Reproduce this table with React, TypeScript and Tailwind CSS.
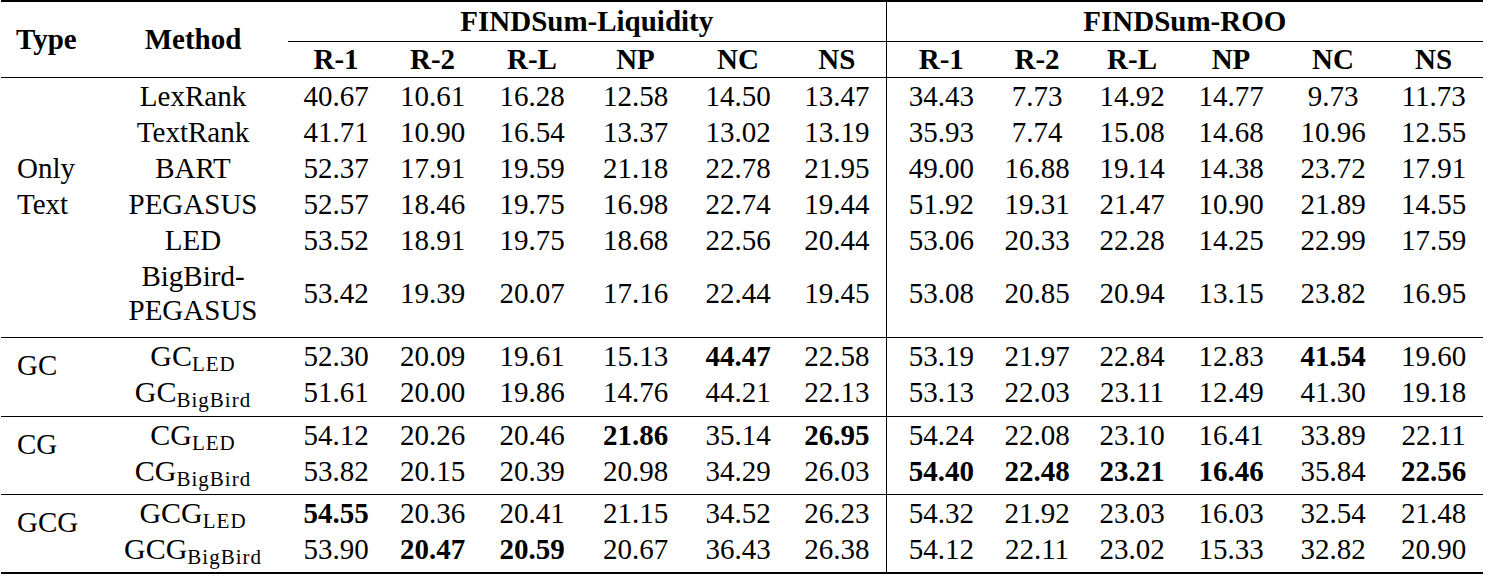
import React from "react"

type Row = { method: React.ReactNode; vals: string[] }

const Sub = ({ base, sub }: { base: string; sub: string }) => (
  <span className="text-[30px]">
    {base}
    <sub className="text-[21px] tracking-[1px] relative -bottom-[5px]">{sub}</sub>
  </span>
)

const onlyText: Row[] = [
  { method: "LexRank", vals: "40.67 10.61 16.28 12.58 14.50 13.47 34.43 7.73 14.92 14.77 9.73 11.73".split(" ") },
  { method: "TextRank", vals: "41.71 10.90 16.54 13.37 13.02 13.19 35.93 7.74 15.08 14.68 10.96 12.55".split(" ") },
  { method: "BART", vals: "52.37 17.91 19.59 21.18 22.78 21.95 49.00 16.88 19.14 14.38 23.72 17.91".split(" ") },
  { method: "PEGASUS", vals: "52.57 18.46 19.75 16.98 22.74 19.44 51.92 19.31 21.47 10.90 21.89 14.55".split(" ") },
  { method: "LED", vals: "53.52 18.91 19.75 18.68 22.56 20.44 53.06 20.33 22.28 14.25 22.99 17.59".split(" ") },
]

const bigBird = "53.42 19.39 20.07 17.16 22.44 19.45 53.08 20.85 20.94 13.15 23.82 16.95".split(" ")

const groups: { type: string; rows: Row[] }[] = [
  {
    type: "GC",
    rows: [
      { method: <Sub base="GC" sub="LED" />, vals: "52.30 20.09 19.61 15.13 *44.47 22.58 53.19 21.97 22.84 12.83 *41.54 19.60".split(" ") },
      { method: <Sub base="GC" sub="BigBird" />, vals: "51.61 20.00 19.86 14.76 44.21 22.13 53.13 22.03 23.11 12.49 41.30 19.18".split(" ") },
    ],
  },
  {
    type: "CG",
    rows: [
      { method: <Sub base="CG" sub="LED" />, vals: "54.12 20.26 20.46 *21.86 35.14 *26.95 54.24 22.08 23.10 16.41 33.89 22.11".split(" ") },
      { method: <Sub base="CG" sub="BigBird" />, vals: "53.82 20.15 20.39 20.98 34.29 26.03 *54.40 *22.48 *23.21 *16.46 35.84 *22.56".split(" ") },
    ],
  },
  {
    type: "GCG",
    rows: [
      { method: <Sub base="GCG" sub="LED" />, vals: "*54.55 20.36 20.41 21.15 34.52 26.23 54.32 21.92 23.03 16.03 32.54 21.48".split(" ") },
      { method: <Sub base="GCG" sub="BigBird" />, vals: "53.90 *20.47 *20.59 20.67 36.43 26.38 54.12 22.11 23.02 15.33 32.82 20.90".split(" ") },
    ],
  },
]

const metrics = ["R-1", "R-2", "R-L", "NP", "NC", "NS"]

function Cells({ vals, cls }: { vals: string[]; cls: string }) {
  return (
    <>
      {vals.map((v, i) => (
        <td
          key={i}
          className={`${cls} text-center ${i === 6 ? "border-l border-black pl-[6px]" : ""} ${v.startsWith("*") ? "font-bold" : ""}`}
        >
          {v.replace("*", "")}
        </td>
      ))}
    </>
  )
}

export default function App() {
  return (
    <div className="w-[1488px] h-[576px] bg-white pl-[1px] font-['Liberation_Serif'] text-[29px] text-black">
      <table className="font-['Liberation_Serif'] border-collapse table-fixed w-[1482px] border-t-2 border-b-2 border-black">
        <colgroup>
          <col className="w-[97px]" />
          <col className="w-[190px]" />
          <col className="w-[96px]" />
          <col className="w-[97px]" />
          <col className="w-[102px]" />
          <col className="w-[105px]" />
          <col className="w-[100px]" />
          <col className="w-[98px]" />
          <col className="w-[104px]" />
          <col className="w-[94px]" />
          <col className="w-[96px]" />
          <col className="w-[102px]" />
          <col className="w-[102px]" />
          <col className="w-[99px]" />
        </colgroup>
        <thead className="font-bold leading-[34px]">
          <tr>
            <th rowSpan={2} className="text-left pl-[15px] align-middle">Type</th>
            <th rowSpan={2} className="text-center align-middle">Method</th>
            <th colSpan={6} className="h-[40px] text-center border-b border-black">FINDSum-Liquidity</th>
            <th colSpan={6} className="h-[40px] text-center border-b border-l border-black">FINDSum-ROO</th>
          </tr>
          <tr className="border-b border-black">
            {[...metrics, ...metrics].map((m, i) => (
              <th key={i} className={`h-[36px] text-center ${i === 6 ? "border-l border-black pl-[6px]" : ""}`}>
                {m}
              </th>
            ))}
          </tr>
        </thead>
        <tbody className="leading-[36px] font-normal">
          {onlyText.map((r, i) => (
            <tr key={i}>
              {i === 0 && (
                <td rowSpan={6} className="align-top text-left pl-[16px] pt-[72px]">
                  Only
                  <br />
                  Text
                </td>
              )}
              <td className="h-[36px] text-center">{r.method}</td>
              <Cells vals={r.vals} cls="h-[36px]" />
            </tr>
          ))}
          <tr>
            <td className="h-[80px] align-top text-center leading-[34px] pt-[1px]">
              BigBird-
              <br />
              PEGASUS
            </td>
            <Cells vals={bigBird} cls="h-[80px] align-top leading-[34px] pt-[18px]" />
          </tr>
        </tbody>
        {groups.map((g, gi) => (
          <tbody key={gi} className="border-t border-black leading-[36px]">
            {g.rows.map((r, ri) => (
              <tr key={ri}>
                {ri === 0 && (
                  <td rowSpan={2} className="align-top text-left pl-[16px] pt-[9px]">
                    {g.type}
                  </td>
                )}
                <td className={`text-center ${ri === 0 ? "h-[36px]" : "h-[42px] align-top"}`}>{r.method}</td>
                <Cells vals={r.vals} cls={ri === 0 ? "h-[36px]" : "h-[42px] align-top"} />
              </tr>
            ))}
          </tbody>
        ))}
      </table>
    </div>
  )
}
